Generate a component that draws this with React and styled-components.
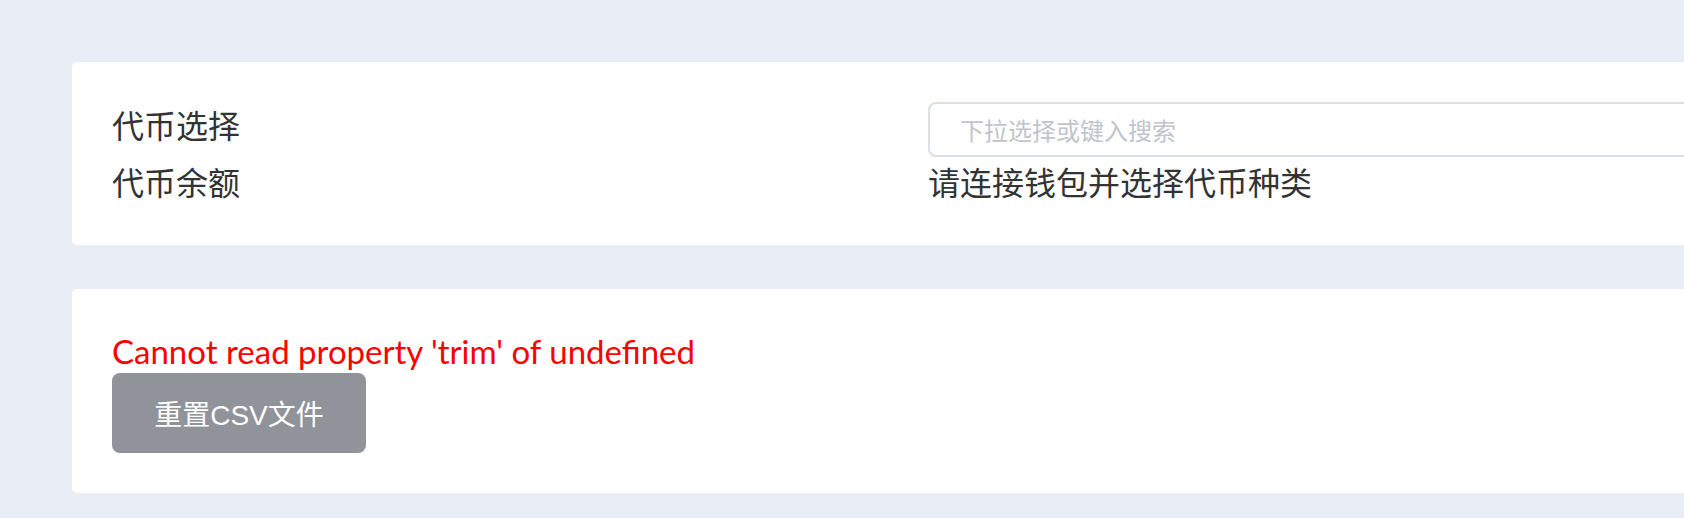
import React from "react";
import styled, { createGlobalStyle } from "styled-components";

const Global = createGlobalStyle`
  html, body { margin: 0; padding: 0; background: #e9edf5; overflow: hidden; }
  body { font-family: "Lato", "Noto Sans CJK SC", sans-serif; }
`;

const Page = styled.div`
  width: 1712px;
  padding: 62px 0 24px 72px;
  display: flex;
  flex-direction: column;
  gap: 44px;
`;

const Card = styled.section`
  background: #ffffff;
  border-radius: 5px;
  padding: 40px;
`;

const Grid = styled.div`
  display: grid;
  grid-template-columns: 816px 1fr;
  align-items: start;
  color: #333333;
  font-family: "Noto Sans CJK SC", sans-serif;
  font-size: 32px;
`;

const Label = styled.div`
  line-height: ${(p) => p.$lh}px;
`;

const Value = styled.div`
  line-height: 48px;
`;

const Input = styled.input`
  box-sizing: border-box;
  width: 100%;
  height: 55px;
  border: 2px solid #dcdfe6;
  border-radius: 8px;
  padding: 0 30px;
  font-family: "Noto Sans CJK SC", sans-serif;
  font-size: 24px;
  color: #606266;
  outline: none;
  &::placeholder { color: #c0c4cc; }
`;

const ErrorText = styled.div`
  color: #ff0000;
  font-family: "Lato", sans-serif;
  font-size: 33px;
  line-height: 44px;
`;

const Button = styled.button`
  width: 254px;
  height: 80px;
  border: none;
  border-radius: 8px;
  background: #909399;
  color: #ffffff;
  font-family: "Liberation Sans", "Noto Sans CJK SC", sans-serif;
  font-size: 28px;
  cursor: pointer;
  display: block;
`;

export default function App() {
  return (
    <>
      <Global />
      <Page>
        <Card>
          <Grid>
            <Label $lh={44}>代币选择</Label>
            <Input placeholder="下拉选择或键入搜索" />
            <Label $lh={48}>代币余额</Label>
            <Value>请连接钱包并选择代币种类</Value>
          </Grid>
        </Card>
        <Card>
          <ErrorText>Cannot read property 'trim' of undefined</ErrorText>
          <Button>重置CSV文件</Button>
        </Card>
      </Page>
    </>
  );
}
